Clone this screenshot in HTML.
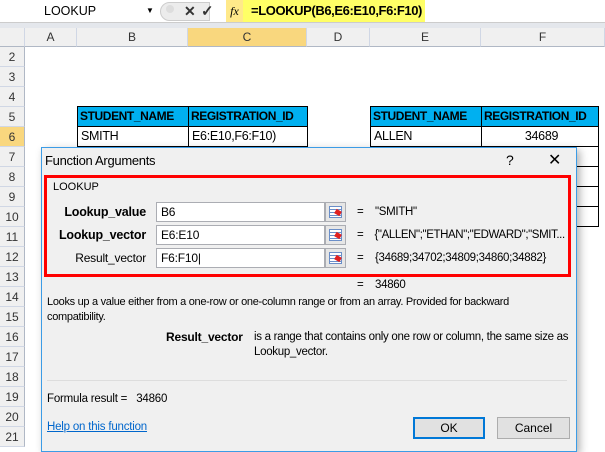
<!DOCTYPE html><html><head><style>
body{margin:0;width:605px;height:444px;overflow:hidden;background:#fff;font-family:"Liberation Sans",sans-serif;font-size:12px;position:relative}
.a{position:absolute;white-space:nowrap}
.rh{position:absolute;left:0;width:25px;height:20px;background:#f0f0f0;border-bottom:1px solid #d0d7e5;border-right:1px solid #b0b8c5;text-align:center;line-height:20px;font-size:12px;color:#333;box-sizing:border-box}
.ch{position:absolute;top:28px;height:19px;background:#f0f0f0;border-right:1px solid #d0d7e5;border-bottom:1px solid #b0b8c5;text-align:center;line-height:19px;color:#333;box-sizing:border-box}
.c{position:absolute;border:1px solid #000;box-sizing:border-box;height:21px;line-height:19px;padding-left:3px;font-size:12.5px;overflow:hidden;white-space:nowrap;letter-spacing:-0.3px}
.h{background:#00b0f0;font-weight:bold;font-size:12px;letter-spacing:-0.4px;padding-left:2px}
.lab{position:absolute;font-size:12px;text-align:right;width:130px;left:16px;letter-spacing:-0.2px}
.in{position:absolute;left:156px;width:169px;height:20px;background:#fff;border:1px solid #abadb3;box-sizing:border-box;line-height:18px;padding-left:4px;font-size:12px;letter-spacing:-0.2px}
.bt{position:absolute;left:325px;width:21px;height:20px;border:1px solid #abadb3;background:#e6e6e6;box-sizing:border-box}
.bt i{position:absolute;left:3px;top:3px;width:13px;height:12px;background:repeating-linear-gradient(#fff 0 2px,#6a8ec8 2px 3px);border:1px solid #6a8ec8;box-sizing:border-box}
.bt b{position:absolute;left:9px;top:7px;width:6px;height:5px;background:#e02020;transform:rotate(30deg)}
.v{position:absolute;left:357px;font-size:11.5px;letter-spacing:-0.3px;white-space:nowrap}
</style></head><body>
<div class="a" style="left:0;top:0;width:605px;height:22px;background:#fff;border-bottom:1px solid #ccc"></div>
<div class="a" style="left:44px;top:4px;font-size:12.5px">LOOKUP</div>
<div class="a" style="left:146px;top:6px;font-size:8px">▼</div>
<div class="a" style="left:160px;top:2px;width:50px;height:19px;border-radius:10px 0 0 10px;background:#ececec;border:1px solid #ccc;box-sizing:border-box"></div>
<div class="a" style="left:166px;top:5px;width:8px;height:8px;border-radius:50%;background:#ddd"></div>
<div class="a" style="left:184px;top:3px;font-size:14px;font-weight:bold;color:#333">✕</div>
<div class="a" style="left:201px;top:2px;font-size:15px;font-weight:bold;color:#333">✓</div>
<div class="a" style="left:226px;top:0;width:17px;height:22px;background:#ffe98a;font-family:'Liberation Serif';font-style:italic;font-size:12px;line-height:22px;text-align:center">fx</div>
<div class="a" style="left:243px;top:0;width:182px;height:22px;background:#ffff66;font-weight:bold;font-size:13px;letter-spacing:-0.4px;line-height:22px;padding-left:8px;box-sizing:border-box">=LOOKUP(B6,E6:E10,F6:F10)</div>
<div class="a" style="left:0;top:23px;width:605px;height:5px;background:#e4e7ec"></div>
<div class="ch" style="left:0;width:25px"></div>
<div class="ch" style="left:25px;width:52px">A</div>
<div class="ch" style="left:77px;width:111px">B</div>
<div class="ch" style="left:188px;width:119px;background:#f9d77e">C</div>
<div class="ch" style="left:307px;width:63px">D</div>
<div class="ch" style="left:370px;width:111px">E</div>
<div class="ch" style="left:481px;width:124px">F</div>
<div class="rh" style="top:47px">2</div><div class="rh" style="top:67px">3</div><div class="rh" style="top:87px">4</div><div class="rh" style="top:107px">5</div><div class="rh" style="top:127px;background:#f9d77e">6</div><div class="rh" style="top:147px">7</div><div class="rh" style="top:167px">8</div><div class="rh" style="top:187px">9</div><div class="rh" style="top:207px">10</div><div class="rh" style="top:227px">11</div><div class="rh" style="top:247px">12</div><div class="rh" style="top:267px">13</div><div class="rh" style="top:287px">14</div><div class="rh" style="top:307px">15</div><div class="rh" style="top:327px">16</div><div class="rh" style="top:347px">17</div><div class="rh" style="top:367px">18</div><div class="rh" style="top:387px">19</div><div class="rh" style="top:407px">20</div><div class="rh" style="top:427px">21</div>
<div class="c h" style="left:77px;top:106px;width:112px">STUDENT_NAME</div>
<div class="c h" style="left:188px;top:106px;width:120px">REGISTRATION_ID</div>
<div class="c" style="left:77px;top:126px;width:112px">SMITH</div>
<div class="c" style="left:188px;top:126px;width:120px">E6:E10,F6:F10)</div>
<div class="c h" style="left:370px;top:106px;width:112px">STUDENT_NAME</div>
<div class="c h" style="left:481px;top:106px;width:118px">REGISTRATION_ID</div>
<div class="c" style="left:370px;top:126px;width:112px">ALLEN</div>
<div class="c" style="left:481px;top:126px;width:118px;text-align:center">34689</div>
<div class="c" style="left:481px;top:146px;width:118px"></div>
<div class="c" style="left:481px;top:166px;width:118px"></div>
<div class="c" style="left:481px;top:186px;width:118px"></div>
<div class="c" style="left:481px;top:206px;width:118px"></div>
<div class="a" style="left:41px;top:147px;width:536px;height:305px;background:#f0f0f0;border:1px solid #3c9ce6;box-sizing:border-box;box-shadow:3px 3px 8px rgba(0,0,0,.3)"></div>
<div class="a" style="left:45px;top:153px;font-size:13px;letter-spacing:-0.3px">Function Arguments</div>
<div class="a" style="left:506px;top:152px;font-size:14px">?</div>
<div class="a" style="left:548px;top:150px;font-size:16px">✕</div>
<div class="a" style="left:44px;top:175px;width:527px;height:102px;border:3px solid #f00;box-sizing:border-box"></div>
<div class="a" style="left:53px;top:181px;font-size:11px">LOOKUP</div>
<div class="lab" style="top:205px;font-weight:bold;font-size:12.5px">Lookup_value</div>
<div class="lab" style="top:228px;font-weight:bold;font-size:12.5px">Lookup_vector</div>
<div class="lab" style="top:251px">Result_vector</div>
<div class="in" style="top:202px">B6</div><div class="bt" style="top:202px"><i></i><b></b></div>
<div class="in" style="top:225px">E6:E10</div><div class="bt" style="top:225px"><i></i><b></b></div>
<div class="in" style="top:248px">F6:F10|</div><div class="bt" style="top:248px"><i></i><b></b></div>
<div class="v" style="top:206px">=&nbsp;&nbsp;&nbsp;&nbsp;"SMITH"</div>
<div class="v" style="top:229px;letter-spacing:-0.4px">=&nbsp;&nbsp;&nbsp;&nbsp;{"ALLEN";"ETHAN";"EDWARD";"SMIT...</div>
<div class="v" style="top:252px;letter-spacing:-0.3px">=&nbsp;&nbsp;&nbsp;&nbsp;{34689;34702;34809;34860;34882}</div>
<div class="v" style="top:279px">=&nbsp;&nbsp;&nbsp;&nbsp;34860</div>
<div class="a" style="left:47px;top:295px;width:520px;font-size:11px;line-height:15px;white-space:normal;letter-spacing:-0.3px">Looks up a value either from a one-row or one-column range or from an array. Provided for backward compatibility.</div>
<div class="a" style="left:166px;top:330px;font-weight:bold;font-size:12px;letter-spacing:-0.2px">Result_vector</div>
<div class="a" style="left:254px;top:330px;width:318px;font-size:11.5px;line-height:15px;white-space:normal;letter-spacing:-0.3px">is a range that contains only one row or column, the same size as Lookup_vector.</div>
<div class="a" style="left:47px;top:380px;width:520px;border-top:1px solid #ddd"></div>
<div class="a" style="left:47px;top:393px;font-size:11.5px;letter-spacing:-0.2px">Formula result =&nbsp;&nbsp;&nbsp;34860</div>
<div class="a" style="left:47px;top:421px;font-size:11.5px;color:#0066cc;text-decoration:underline;letter-spacing:-0.2px">Help on this function</div>
<div class="a" style="left:413px;top:417px;width:72px;height:22px;border:2px solid #0078d7;background:#e1e1e1;box-sizing:border-box;text-align:center;line-height:18px">OK</div>
<div class="a" style="left:497px;top:417px;width:73px;height:22px;border:1px solid #adadad;background:#e1e1e1;box-sizing:border-box;text-align:center;line-height:20px">Cancel</div>
</body></html>
